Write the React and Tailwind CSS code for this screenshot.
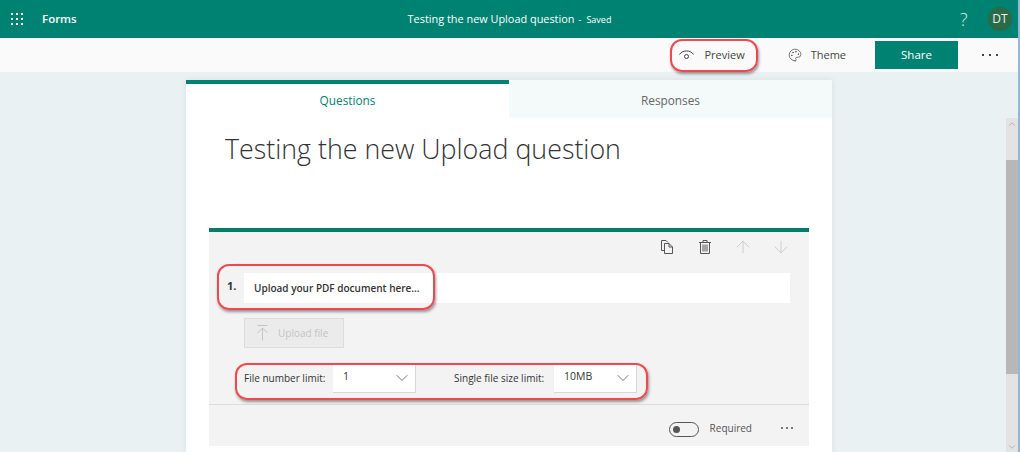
import React from 'react';
import { ChevronDown, ArrowUp, ArrowDown, Palette } from 'lucide-react';

const font = 'font-["Open_Sans",sans-serif]';

const WaffleIcon = () => (
  <svg width="14" height="14" viewBox="0 0 14 14" fill="#fff">
    {[1, 6, 11].map((y) =>
      [1, 6, 11].map((x) => <rect key={`${x}-${y}`} x={x} y={y} width="2" height="2" />)
    )}
  </svg>
);

const EyeIcon = () => (
  <svg width="15" height="12" viewBox="0 0 15 12" fill="none" stroke="#444" strokeWidth="1">
    <path d="M0.5 5.5 C3 1 11.5 0.5 14.5 5.5" />
    <circle cx="7.5" cy="7.5" r="2" />
  </svg>
);

const CopyIcon = () => (
  <svg width="12" height="14" viewBox="0 0 12 14" fill="none" stroke="#555" strokeWidth="1">
    <path d="M4 10.5 H0.5 V0.5 H5 L7 2.5" />
    <path d="M3.5 3.5 H8 L11.5 7 V13.5 H3.5 Z" />
    <path d="M8 3.5 V7 H11.5" />
  </svg>
);

const TrashIcon = () => (
  <svg width="12" height="14" viewBox="0 0 12 14" fill="none" stroke="#555" strokeWidth="1">
    <path d="M0 2.5 H12" />
    <path d="M4 2.5 V0.5 H8 V2.5" />
    <path d="M1.5 2.5 V13.5 H10.5 V2.5" />
    <path d="M4 4.5 V11.5 M6 4.5 V11.5 M8 4.5 V11.5" />
  </svg>
);

const UploadIcon = () => (
  <svg width="11" height="16" viewBox="0 0 11 16" fill="none" stroke="#c4c4c4" strokeWidth="1">
    <path d="M0.5 0.5 H10.5" />
    <path d="M5.5 3 V15.5" />
    <path d="M0.5 8 L5.5 3 L10.5 8" />
  </svg>
);

const Dots = ({ className }) => (
  <div className={`flex ${className}`}>
    <span className="w-[2px] h-[2px] bg-current" />
    <span className="w-[2px] h-[2px] bg-current" />
    <span className="w-[2px] h-[2px] bg-current" />
  </div>
);

const Callout = ({ className }) => (
  <div
    className={`absolute border-2 border-[#f0484f] rounded-[12px] shadow-[1px_2px_3px_rgba(0,0,0,0.4)] pointer-events-none ${className}`}
  />
);

const LimitSelect = ({ value }) => (
  <div className="w-[83px] h-[30px] bg-white border-b border-r border-[#d8d8d8] flex items-center justify-between pl-[10px] pr-[3px] text-[10.5px] text-[#333]">
    <span className="relative -top-[1px]">{value}</span>
    <ChevronDown size={20} strokeWidth={0.9} color="#444" />
  </div>
);

export default function App() {
  return (
    <div className={`relative w-[1020px] h-[452px] overflow-hidden bg-[#e9f1f3] ${font}`}>
      {/* barra superior */}
      <header className="h-[38px] bg-[#008272] flex items-center text-white">
        <div className="w-[42px] pl-[10px] flex items-center">
          <WaffleIcon />
        </div>
        <span className="text-[11.5px] font-semibold w-[60px]">Forms</span>
        <div className="flex-1 flex justify-center items-baseline pl-[2px] pr-[47px]">
          <span className="text-[10.9px]">Testing the new Upload question</span>
          <span className="text-[9px] ml-[4px]">-</span>
          <span className="text-[9px] ml-[5px]">Saved</span>
        </div>
        <span className="text-[18px] font-light w-[30px] -ml-[2px] text-[#dcefec]">?</span>
        <div className="w-[24px] h-[24px] rounded-full bg-[#2a6a46] text-[12px] flex items-center justify-center mr-[8px] -ml-[2px] text-[#e8f3ee]">
          DT
        </div>
      </header>

      {/* barra de acciones */}
      <div className="h-[34px] bg-[#fafafa] flex items-center justify-end text-[11px] text-[#444]">
        <div className="flex items-center gap-[10px] mr-[43px]">
          <EyeIcon />
          <span className="pt-[1px]">Preview</span>
        </div>
        <div className="flex items-center gap-[9px] mr-[29px]">
          <Palette size={14} strokeWidth={1.2} color="#444" />
          <span className="pt-[1px]">Theme</span>
        </div>
        <div className="w-[83px] h-[28px] bg-[#008272] text-white text-[11.5px] flex items-center justify-center mr-[24px]">
          Share
        </div>
        <Dots className="gap-[5px] text-[#444] mr-[22px]" />
      </div>

      {/* tarjeta del formulario */}
      <div className="w-[646px] ml-[186px] mt-[8px] shadow-[0_0_6px_rgba(0,0,0,0.08)]">
        <div className="flex h-[38px] text-[11.8px]">
          <div className="w-[323px] bg-white border-t-4 border-[#008272] flex items-center justify-center text-[#008272]">
            Questions
          </div>
          <div className="flex-1 bg-[#f4f9f9] flex items-center justify-center text-[#666] pt-[4px]">
            Responses
          </div>
        </div>
        <div className="bg-white h-[334px] px-[23px]">
          <h1 className="text-[26.8px] font-light text-[#333] ml-[16px] pt-[9px] leading-[44px] h-[110px]">
            Testing the new Upload question
          </h1>
          <div className="w-[600px] h-[218px] bg-[#f3f3f3] border-t-4 border-[#047c6c]">
            <div className="h-[41px] flex items-start pt-[5px]">
              <div className="ml-[452px] mt-[3px] w-[12px] flex justify-center"><CopyIcon /></div>
              <div className="ml-[26px] mt-[3px] w-[12px] flex justify-center"><TrashIcon /></div>
              <ArrowUp size={20} strokeWidth={0.8} color="#bbb" className="ml-[22px]" />
              <ArrowDown size={20} strokeWidth={0.8} color="#bbb" className="ml-[18px]" />
            </div>
            <div className="flex h-[30px] items-center">
              <span className="w-[35px] pl-[18px] text-[11px] font-bold text-[#333] relative -top-[2px]">1.</span>
              <div className="w-[546px] h-[30px] bg-white flex items-center pl-[10px] text-[10px] font-semibold text-[#333]">
                Upload your PDF document here...
              </div>
            </div>
            <div className="ml-[35px] mt-[15px] w-[100px] h-[30px] bg-[#ebebeb] border border-[#dcdcdc] flex items-center pl-[12px] gap-[10px] text-[10px] text-[#c4c4c4]">
              <UploadIcon />
              <span>Upload file</span>
            </div>
            <div className="ml-[35px] mt-[15px] flex items-center h-[30px] text-[10px] text-[#333]">
              <span className="w-[89px]">File number limit:</span>
              <LimitSelect value="1" />
              <span className="ml-[38px] w-[100px] whitespace-nowrap">Single file size limit:</span>
              <LimitSelect value="10MB" />
            </div>
            <div className="mt-[11px] border-t border-[#dcdcdc] h-[41px] flex items-center justify-end pr-[16px] pt-[6px] text-[10px] text-[#555]">
              <div className="w-[30px] h-[15px] mt-[2px] rounded-full border-[1.5px] border-[#555] flex items-center pl-[3px] mr-[11px]">
                <span className="w-[7px] h-[7px] rounded-full bg-[#555]" />
              </div>
              <span className="mr-[29px]">Required</span>
              <Dots className="gap-[3px] text-[#777]" />
            </div>
          </div>
        </div>
      </div>

      {/* anotaciones rojas */}
      <Callout className="left-[670px] top-[39px] w-[88px] h-[33px]" />
      <Callout className="left-[217px] top-[264px] w-[218px] h-[46px]" />
      <Callout className="left-[235px] top-[363px] w-[413px] h-[37px]" />

      {/* barra de scroll */}
      <div className="absolute left-[1006px] top-[118px] bottom-0 w-[12px] bg-[#e3e3e3] flex flex-col justify-between items-center">
        <ChevronDown size={10} color="#aaa" className="rotate-180 mt-[1px]" />
        <ChevronDown size={10} color="#aaa" />
      </div>
      <div className="absolute left-[1006px] top-[160px] h-[214px] w-[12px] bg-[#b7b7b7]" />
      <div className="absolute left-[1018px] top-0 bottom-0 w-[2px] bg-[#8fb8dc]" />
    </div>
  );
}
